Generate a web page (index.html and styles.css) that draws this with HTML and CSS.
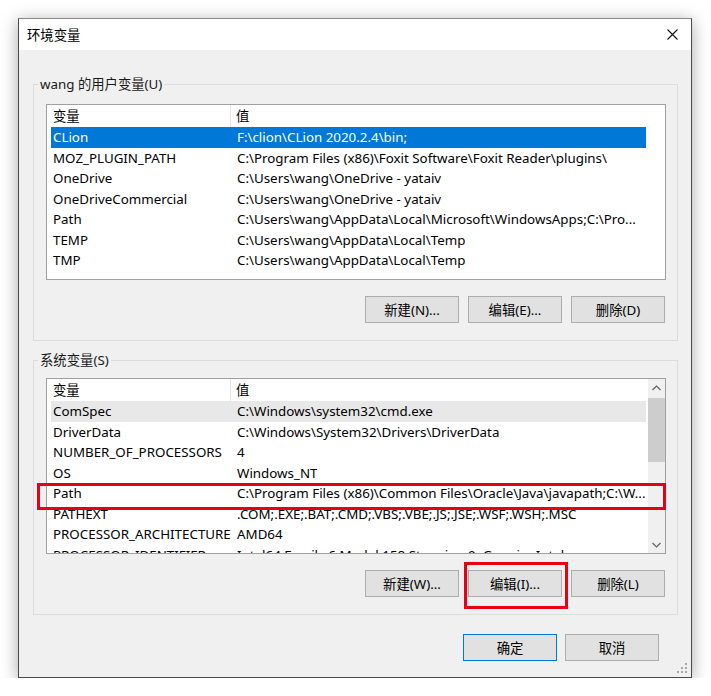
FILE: index.html
```html
<!DOCTYPE html>
<html lang="zh-CN">
  <head>
    <meta charset="UTF-8" />
    <title>环境变量</title>
    <link rel="stylesheet" href="styles.css">
  </head>
  <body>
    <div class="window">
      <div class="titlebar">
        <span class="title">环境变量</span>
        <span class="close">
          <svg width="11" height="11" viewBox="0 0 11 11">
            <path d="M0.5 0.5 L10.5 10.5 M10.5 0.5 L0.5 10.5" stroke="#111" stroke-width="1.1" fill="none" />
          </svg>
        </span>
      </div>

      <div class="client">
        <fieldset class="group group-user">
          <legend>wang 的用户变量(U)</legend>
          <div class="listview">
            <div class="lv-main">
              <div class="lv-header">
                <div class="col-name">变量</div>
                <div class="col-value">值</div>
              </div>
              <div class="lv-body">
                <div class="row selected"><span class="cell-name">CLion</span><span class="cell-value">F:\clion\CLion 2020.2.4\bin;</span></div>
                <div class="row"><span class="cell-name">MOZ_PLUGIN_PATH</span><span class="cell-value">C:\Program Files (x86)\Foxit Software\Foxit Reader\plugins\</span></div>
                <div class="row"><span class="cell-name">OneDrive</span><span class="cell-value">C:\Users\wang\OneDrive - yataiv</span></div>
                <div class="row"><span class="cell-name">OneDriveCommercial</span><span class="cell-value">C:\Users\wang\OneDrive - yataiv</span></div>
                <div class="row"><span class="cell-name">Path</span><span class="cell-value">C:\Users\wang\AppData\Local\Microsoft\WindowsApps;C:\Pro...</span></div>
                <div class="row"><span class="cell-name">TEMP</span><span class="cell-value">C:\Users\wang\AppData\Local\Temp</span></div>
                <div class="row"><span class="cell-name">TMP</span><span class="cell-value">C:\Users\wang\AppData\Local\Temp</span></div>
              </div>
            </div>
          </div>
          <div class="btn-row">
            <button class="btn">新建(N)...</button>
            <button class="btn">编辑(E)...</button>
            <button class="btn">删除(D)</button>
          </div>
        </fieldset>

        <fieldset class="group group-system">
          <legend>系统变量(S)</legend>
          <div class="listview">
            <div class="lv-main">
              <div class="lv-header">
                <div class="col-name">变量</div>
                <div class="col-value">值</div>
              </div>
              <div class="lv-body">
                <div class="row hover"><span class="cell-name">ComSpec</span><span class="cell-value">C:\Windows\system32\cmd.exe</span></div>
                <div class="row"><span class="cell-name">DriverData</span><span class="cell-value">C:\Windows\System32\Drivers\DriverData</span></div>
                <div class="row"><span class="cell-name">NUMBER_OF_PROCESSORS</span><span class="cell-value">4</span></div>
                <div class="row"><span class="cell-name">OS</span><span class="cell-value">Windows_NT</span></div>
                <div class="row"><span class="cell-name">Path</span><span class="cell-value">C:\Program Files (x86)\Common Files\Oracle\Java\javapath;C:\W...</span></div>
                <div class="row"><span class="cell-name">PATHEXT</span><span class="cell-value">.COM;.EXE;.BAT;.CMD;.VBS;.VBE;.JS;.JSE;.WSF;.WSH;.MSC</span></div>
                <div class="row"><span class="cell-name">PROCESSOR_ARCHITECTURE</span><span class="cell-value">AMD64</span></div>
                <div class="row"><span class="cell-name">PROCESSOR_IDENTIFIER</span><span class="cell-value">Intel64 Family 6 Model 158 Stepping 9, GenuineIntel</span></div>
              </div>
            </div>
            <div class="scrollbar">
              <span class="sb-arrow">
                <svg width="9" height="6" viewBox="0 0 9 6"><path d="M0.5 5 L4.5 1 L8.5 5" stroke="#606060" stroke-width="1.2" fill="none" /></svg>
              </span>
              <span class="sb-track"><span class="sb-thumb"></span></span>
              <span class="sb-arrow">
                <svg width="9" height="6" viewBox="0 0 9 6"><path d="M0.5 1 L4.5 5 L8.5 1" stroke="#606060" stroke-width="1.2" fill="none" /></svg>
              </span>
            </div>
            <div class="mark mark-row"></div>
          </div>
          <div class="btn-row">
            <button class="btn">新建(W)...</button>
            <button class="btn marked">编辑(I)...</button>
            <button class="btn">删除(L)</button>
          </div>
        </fieldset>

        <div class="dialog-buttons">
          <button class="btn default">确定</button>
          <button class="btn">取消</button>
        </div>

        <svg class="grip" width="12" height="12" viewBox="0 0 12 12">
          <rect x="8" y="0" width="2" height="2" fill="#a8a8a8" />
          <rect x="4" y="4" width="2" height="2" fill="#a8a8a8" />
          <rect x="8" y="4" width="2" height="2" fill="#a8a8a8" />
          <rect x="0" y="8" width="2" height="2" fill="#a8a8a8" />
          <rect x="4" y="8" width="2" height="2" fill="#a8a8a8" />
          <rect x="8" y="8" width="2" height="2" fill="#a8a8a8" />
        </svg>
      </div>
    </div>
  </body>
</html>
```

FILE: styles.css
```css
body {
  margin: 0;
  background: #fff;
  font-family: "Noto Sans", "Noto Sans CJK SC", sans-serif;
  font-size: 13.35px;
  color: #000;
}

.window {
  margin: 18px 0 0 18px;
  width: 674px;
  height: 660px;
  box-sizing: border-box;
  border: 1px solid #4a4a4a;
  border-top-color: #8a8a8a;
  box-shadow: 0 3px 16px rgba(0, 0, 0, 0.35);
  display: flex;
  flex-direction: column;
}

.titlebar {
  height: 31px;
  background: #fff;
  display: flex;
  align-items: center;
  padding-left: 8px;
}

.title {
  flex: 1;
}

.close {
  width: 11px;
  height: 11px;
  margin-right: 13px;
  display: flex;
}

.client {
  flex: 1;
  background: #f0f0f0;
  position: relative;
  padding: 0 13px 0 14px;
}

/* group boxes */
.group {
  margin: 0;
  border: 1px solid #dcdcdc;
  padding: 11px 11px 17px 12px;
  min-inline-size: 0;
}

.group legend {
  margin-left: -8px;
  padding: 0 2px;
  line-height: 18px;
  color: #1a1a1a;
}

.group-user {
  margin-top: 25px;
}

.group-system {
  margin-top: 10px;
  padding-top: 9px;
}

/* list view */
.listview {
  position: relative;
  height: 176px;
  box-sizing: border-box;
  border: 1px solid #a0a0a0;
  background: #fff;
  display: flex;
}

.lv-main {
  flex: 1;
  display: flex;
  flex-direction: column;
  min-width: 0;
}

.lv-header {
  display: flex;
  height: 22px;
  flex-shrink: 0;
  align-items: stretch;
}

.lv-header .col-name {
  width: 184px;
  box-sizing: border-box;
  padding-left: 6px;
  border-right: 1px solid #e5e5e5;
  line-height: 22px;
}

.lv-header .col-value {
  padding-left: 5px;
  line-height: 22px;
}

.lv-body {
  flex: 1;
  overflow: hidden;
  padding-left: 4px;
}

.row {
  display: flex;
  width: 595px;
  height: 20.5px;
  line-height: 20.5px;
  white-space: nowrap;
}

.row.selected {
  background: #0078d7;
  color: #fff;
}

.row.hover {
  background: #e8e8e8;
}

.cell-name {
  width: 180px;
  flex-shrink: 0;
  padding-left: 2px;
  box-sizing: border-box;
  overflow: hidden;
}

.cell-value {
  padding-left: 6px;
  overflow: hidden;
}

/* scroll bar */
.scrollbar {
  width: 17px;
  margin-left: 1px;
  background: #f0f0f0;
  display: flex;
  flex-direction: column;
}

.sb-arrow {
  height: 17px;
  display: flex;
  align-items: center;
  justify-content: center;
}

.sb-track {
  flex: 1;
  padding-top: 2px;
}

.sb-thumb {
  display: block;
  height: 64px;
  background: #cdcdcd;
}

/* buttons */
.btn-row {
  display: flex;
  justify-content: flex-end;
  gap: 9px;
  margin-top: 16px;
  padding-right: 1px;
}

.btn {
  width: 94px;
  height: 27px;
  margin: 0;
  padding: 0;
  background: #e1e1e1;
  border: 1px solid #adadad;
  font-family: inherit;
  font-size: 13.35px;
  color: #000;
}

.btn.default {
  border-color: #0078d7;
}

.dialog-buttons {
  display: flex;
  justify-content: flex-end;
  gap: 8px;
  margin-top: 19px;
  padding-right: 19px;
}

/* red annotation frames */
.mark {
  position: absolute;
  border: 3px solid #e60012;
  box-sizing: border-box;
}

.mark-row {
  left: -10px;
  top: 104px;
  width: 629px;
  height: 27px;
}

.btn.marked {
  position: relative;
}

.btn.marked::after {
  content: "";
  position: absolute;
  left: -5px;
  top: -9px;
  width: 104px;
  height: 47px;
  border: 3px solid #e60012;
  box-sizing: border-box;
}

.grip {
  position: absolute;
  right: 2px;
  bottom: 2px;
}
```
